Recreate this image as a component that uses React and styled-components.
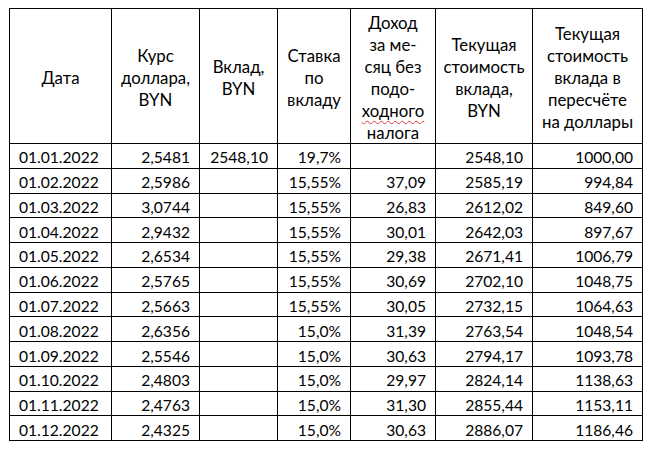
import React from 'react';
import styled, { createGlobalStyle } from 'styled-components';

const Global = createGlobalStyle`
  html, body { margin: 0; padding: 0; background: #fff; }
  body { font-family: Lato, "Open Sans", "Noto Sans", sans-serif; color: #000; }
`;

const Page = styled.div`
  box-sizing: border-box;
  width: 651px;
  height: 451px;
  padding: 8px 0 0 9px;
  background: #fff;
`;

const Table = styled.div`
  box-sizing: border-box;
  display: grid;
  grid-template-columns: 102px 88px 78px 73px 85px 97px 110px;
  grid-template-rows: 135px repeat(12, 24.78px);
  width: 634px;
  border-left: 1px solid #000;
  border-top: 1px solid #000;
`;

const HeadCell = styled.div`
  box-sizing: border-box;
  display: flex;
  align-items: center;
  justify-content: center;
  padding: 3px 0 0;
  border-right: 1px solid #000;
  border-bottom: 1px solid #000;
  font-size: 16.8px;
  line-height: 22px;
  text-align: center;
`;

const HeadText = styled.span`
  display: block;
  white-space: nowrap;
`;

const Spell = styled.span`
  text-decoration: underline wavy #e0393e;
  text-decoration-thickness: 1px;
  text-underline-offset: 3px;
`;

const Cell = styled.div`
  box-sizing: border-box;
  display: flex;
  align-items: center;
  justify-content: ${(p) => (p.$left ? 'flex-start' : 'flex-end')};
  padding: 3px 9px 0;
  border-right: 1px solid #000;
  border-bottom: 1px solid #000;
  font-size: 15.6px;
  line-height: 20px;
  white-space: nowrap;
`;

const rows = [
  ['01.01.2022', '2,5481', '2548,10', '19,7%', '', '2548,10', '1000,00'],
  ['01.02.2022', '2,5986', '', '15,55%', '37,09', '2585,19', '994,84'],
  ['01.03.2022', '3,0744', '', '15,55%', '26,83', '2612,02', '849,60'],
  ['01.04.2022', '2,9432', '', '15,55%', '30,01', '2642,03', '897,67'],
  ['01.05.2022', '2,6534', '', '15,55%', '29,38', '2671,41', '1006,79'],
  ['01.06.2022', '2,5765', '', '15,55%', '30,69', '2702,10', '1048,75'],
  ['01.07.2022', '2,5663', '', '15,55%', '30,05', '2732,15', '1064,63'],
  ['01.08.2022', '2,6356', '', '15,0%', '31,39', '2763,54', '1048,54'],
  ['01.09.2022', '2,5546', '', '15,0%', '30,63', '2794,17', '1093,78'],
  ['01.10.2022', '2,4803', '', '15,0%', '29,97', '2824,14', '1138,63'],
  ['01.11.2022', '2,4763', '', '15,0%', '31,30', '2855,44', '1153,11'],
  ['01.12.2022', '2,4325', '', '15,0%', '30,63', '2886,07', '1186,46'],
];

const headers = [
  ['Дата'],
  ['Курс', 'доллара,', 'BYN'],
  ['Вклад,', 'BYN'],
  ['Ставка', 'по', 'вкладу'],
  ['Доход', 'за ме-', 'сяц без', 'подо-', <Spell key="s">ходного</Spell>, 'налога'],
  ['Текущая', 'стоимость', 'вклада,', 'BYN'],
  ['Текущая', 'стоимость', 'вклада в', 'пересчёте', 'на доллары'],
];

export default function App() {
  return (
    <Page>
      <Global />
      <Table>
        {headers.map((lines, i) => (
          <HeadCell key={`h${i}`}>
            <HeadText>
              {lines.map((l, j) => (
                <React.Fragment key={j}>
                  {j > 0 && <br />}
                  {l}
                </React.Fragment>
              ))}
            </HeadText>
          </HeadCell>
        ))}
        {rows.map((r, ri) =>
          r.map((v, ci) => (
            <Cell key={`${ri}-${ci}`} $left={ci === 0}>
              {v}
            </Cell>
          ))
        )}
      </Table>
    </Page>
  );
}
